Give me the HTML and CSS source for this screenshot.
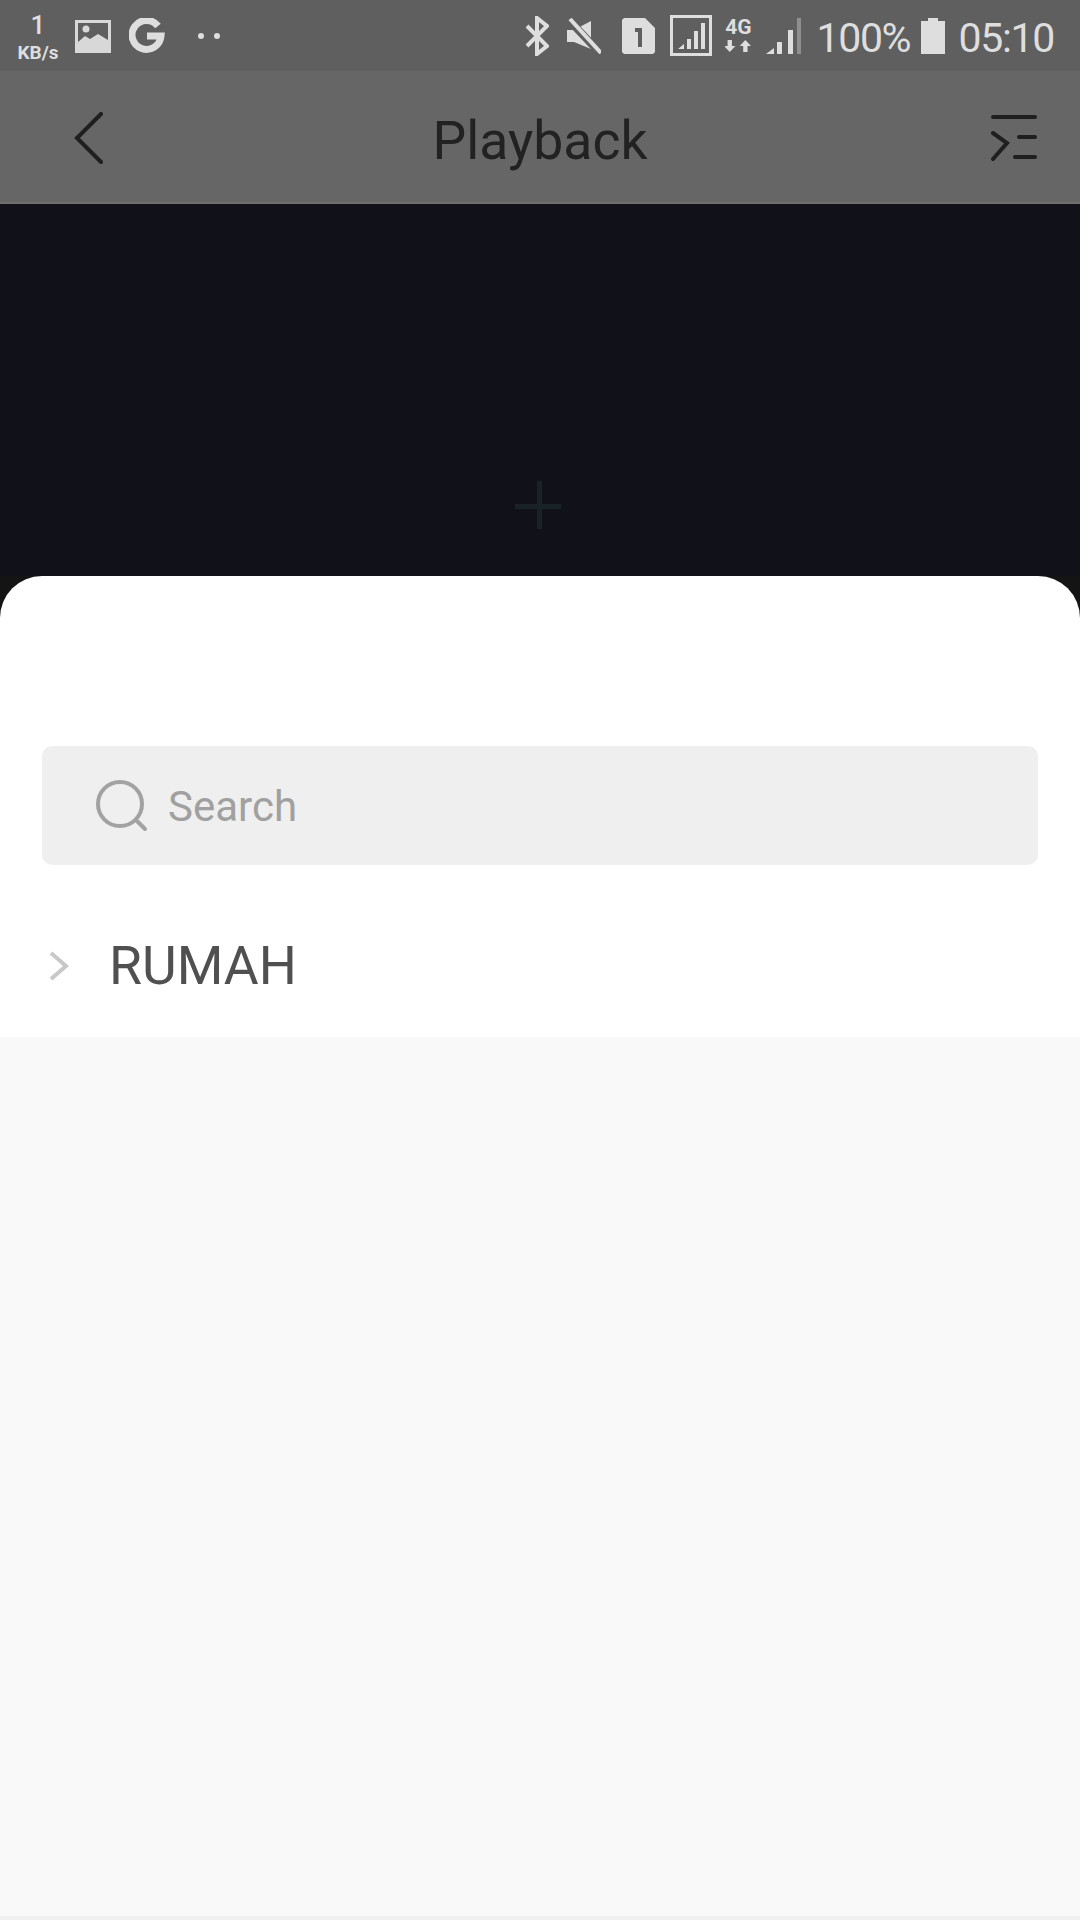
FILE: index.html
```html
<!DOCTYPE html>
<html lang="en">
<head>
<meta charset="utf-8">
<title>Playback</title>
<link rel="stylesheet" href="styles.css">
</head>
<body>
<div class="page">
  <header class="status">
    <div class="status-left">
      <div class="speed"><span class="speed-num">1</span><span class="speed-unit">KB/s</span></div>
      <svg class="ic-image" viewBox="0 0 36 34"><path fill="#d8d8d8" fill-rule="evenodd" d="M0 1h36v33H0zM3 4v19l7-6 5 3 8-5 10 6V4z"/><circle cx="11" cy="10" r="3.500" fill="#d8d8d8"/></svg>
      <svg class="ic-g" viewBox="0 0 36 36"><path fill="none" stroke="#dedede" stroke-width="7" d="M29 8A14.500 14.500 0 1 0 32 18H18"/></svg>
      <svg class="ic-dots" viewBox="0 0 26 8"><circle cx="4" cy="4" r="3" fill="#dedede"/><circle cx="20" cy="4" r="3" fill="#dedede"/></svg>
    </div>
    <div class="status-right">
      <svg class="ic-bt" viewBox="0 0 24 40"><path fill="none" stroke="#dedede" stroke-width="4" d="M2 10l20 20-10 8V2l10 8L2 30"/></svg>
      <svg class="ic-mute" viewBox="0 0 34 36"><path fill="#dedede" d="M0 12h7L24 3v28L7 24H0z"/><path stroke="#5f5f5f" stroke-width="8" d="M0 0l34 36"/><path stroke="#dedede" stroke-width="4" d="M3 1l31 34"/></svg>
      <svg class="ic-sim" viewBox="0 0 33 36"><path fill="#dedede" d="M2 0h21l10 10v24l-2 2H2l-2-2V2z"/><path fill="#5f5f5f" d="M13 10h7v19h-4V14h-3z"/></svg>
      <svg class="ic-box" viewBox="0 0 42 41"><rect x="1.500" y="1.500" width="39" height="38" fill="none" stroke="#dedede" stroke-width="3"/><path fill="#dedede" d="M8 34l6-5v5zM17 34V24h4v10zM24 34V16h4v18zM31 34V8h4v26z"/></svg>
      <div class="net"><span class="net-label">4G</span><svg class="ic-arrows" viewBox="0 0 30 14"><path fill="#dedede" d="M3 0h5v7h4l-6.500 7L-1 7h4zM21 14h5V7h4l-6.500-7L17 7h4z"/></svg></div>
      <svg class="ic-signal" viewBox="0 0 35 36"><path fill="#dedede" d="M0 36l8-6v6zM11 36V24h5v12zM22 36V12h5v24z"/><path fill="#8f8f8f" d="M31 36V0h4v36z"/></svg>
      <span class="status-text pct">100%</span>
      <svg class="ic-batt" viewBox="0 0 24 36"><path fill="#dedede" d="M7 0h10v3h7v33H0V3h7z"/></svg>
      <span class="status-text">05:10</span>
    </div>
  </header>

  <nav class="toolbar">
    <svg class="ic-back" viewBox="0 0 30 52"><path fill="none" stroke="#1f1f1f" stroke-width="4" stroke-linecap="round" d="M27 2L3 26l24 24"/></svg>
    <h1 class="title">Playback</h1>
    <svg class="ic-menu" viewBox="0 0 46 46"><path fill="none" stroke="#1f1f1f" stroke-width="4" stroke-linecap="round" d="M2 2h42M2 18l14 10-14 16M28 22h16M24 42h20"/></svg>
  </nav>

  <section class="video">
    <svg class="ic-plus" viewBox="0 0 46 48"><path fill="#192226" d="M22 0h5v48h-5zM0 23h46v5H0z"/></svg>
  </section>

  <div class="sheet-wrap">
    <section class="sheet">
      <div class="search">
        <svg class="ic-search" viewBox="0 0 52 52"><circle cx="24" cy="24" r="22" fill="none" stroke="#a2a2a2" stroke-width="4"/><path stroke="#a2a2a2" stroke-width="4" stroke-linecap="round" d="M41 41l8 8"/></svg>
        <span class="search-text">Search</span>
      </div>
      <div class="row">
        <svg class="ic-chev" viewBox="0 0 20 30"><path fill="none" stroke="#c8c8c8" stroke-width="4" d="M2 2l15 13L2 28"/></svg>
        <span class="row-text">RUMAH</span>
      </div>
    </section>
  </div>
  <div class="rest"></div>
</div>
</body>
</html>
```

FILE: styles.css
```css
* { box-sizing: border-box; }
html, body { margin: 0; padding: 0; }
body { width: 1080px; height: 1920px; overflow: hidden; background: #f9f9f9; font-family: Roboto, "Liberation Sans", sans-serif; }
svg { display: block; flex: none; }
.page { display: flex; flex-direction: column; height: 1920px; }

.status { flex: none; height: 71px; background: #5f5f5f; display: flex; justify-content: space-between; align-items: center; color: #dedede; padding: 0 26px 0 17px; }
.status-left, .status-right { display: flex; align-items: center; }
.speed { display: flex; flex-direction: column; align-items: center; width: 42px; font-weight: 700; padding-top: 2px; }
.speed-num { font-size: 26px; line-height: 31px; font-weight: 500; }
.speed-unit { font-size: 19px; line-height: 23px; white-space: nowrap; }
.ic-image { width: 36px; height: 34px; margin-left: 16px; }
.ic-g { width: 36px; height: 36px; margin-left: 18px; }
.ic-dots { width: 26px; height: 8px; margin-left: 32px; }
.ic-bt { width: 24px; height: 40px; }
.ic-mute { width: 34px; height: 36px; margin-left: 18px; }
.ic-sim { width: 33px; height: 36px; margin-left: 21px; }
.ic-box { width: 42px; height: 41px; margin-left: 15px; }
.net { width: 30px; margin-left: 11px; display: flex; flex-direction: column; align-items: center; gap: 3px; }
.net-label { font-size: 21px; line-height: 18px; font-weight: 700; }
.ic-arrows { width: 26px; height: 14px; }
.ic-signal { width: 35px; height: 36px; margin-left: 13px; }
.status-text { font-size: 41px; line-height: 48px; letter-spacing: -1.300px; margin-top: 4px; }
.pct { margin-left: 15px; width: 92px; }
.ic-batt { width: 24px; height: 36px; margin-left: 13px; margin-right: 13px; }

.toolbar { flex: none; height: 133px; background: #666; border-bottom: 2px solid #707070; display: grid; grid-template-columns: 1fr auto 1fr; align-items: center; padding: 0 43px; }
.title { margin: 8px 0 0; font-size: 53.500px; line-height: 60px; font-weight: 400; color: #222; }
.ic-back { width: 30px; height: 52px; margin: 2px 0 0 31px; }
.ic-menu { width: 46px; height: 46px; justify-self: end; margin-top: 2px; }

.video { flex: none; height: 372px; background: #111119; padding: 277px 4px 0 0; display: flex; justify-content: center; overflow: hidden; }
.ic-plus { width: 46px; height: 48px; }

.sheet-wrap { flex: none; background: #141414; }
.sheet { height: 461px; background: #fff; border-radius: 42px 42px 0 0; padding: 170px 42px 0; }
.search { height: 119px; background: #efefef; border-radius: 10px; display: flex; align-items: center; gap: 20px; padding-left: 54px; }
.ic-search { width: 52px; height: 52px; }
.search-text { font-size: 42px; line-height: 50px; color: #a0a0a0; margin-top: 3px; }
.row { display: flex; align-items: center; height: 104px; margin-top: 30px; padding-top: 38px; margin-left: 7px; gap: 40px; }
.ic-chev { width: 20px; height: 30px; }
.row-text { font-size: 53.500px; line-height: 60px; color: #505050; }
.rest { flex: 1; background: #f9f9f9; border-bottom: 4px solid #f0f0f0; }
```
